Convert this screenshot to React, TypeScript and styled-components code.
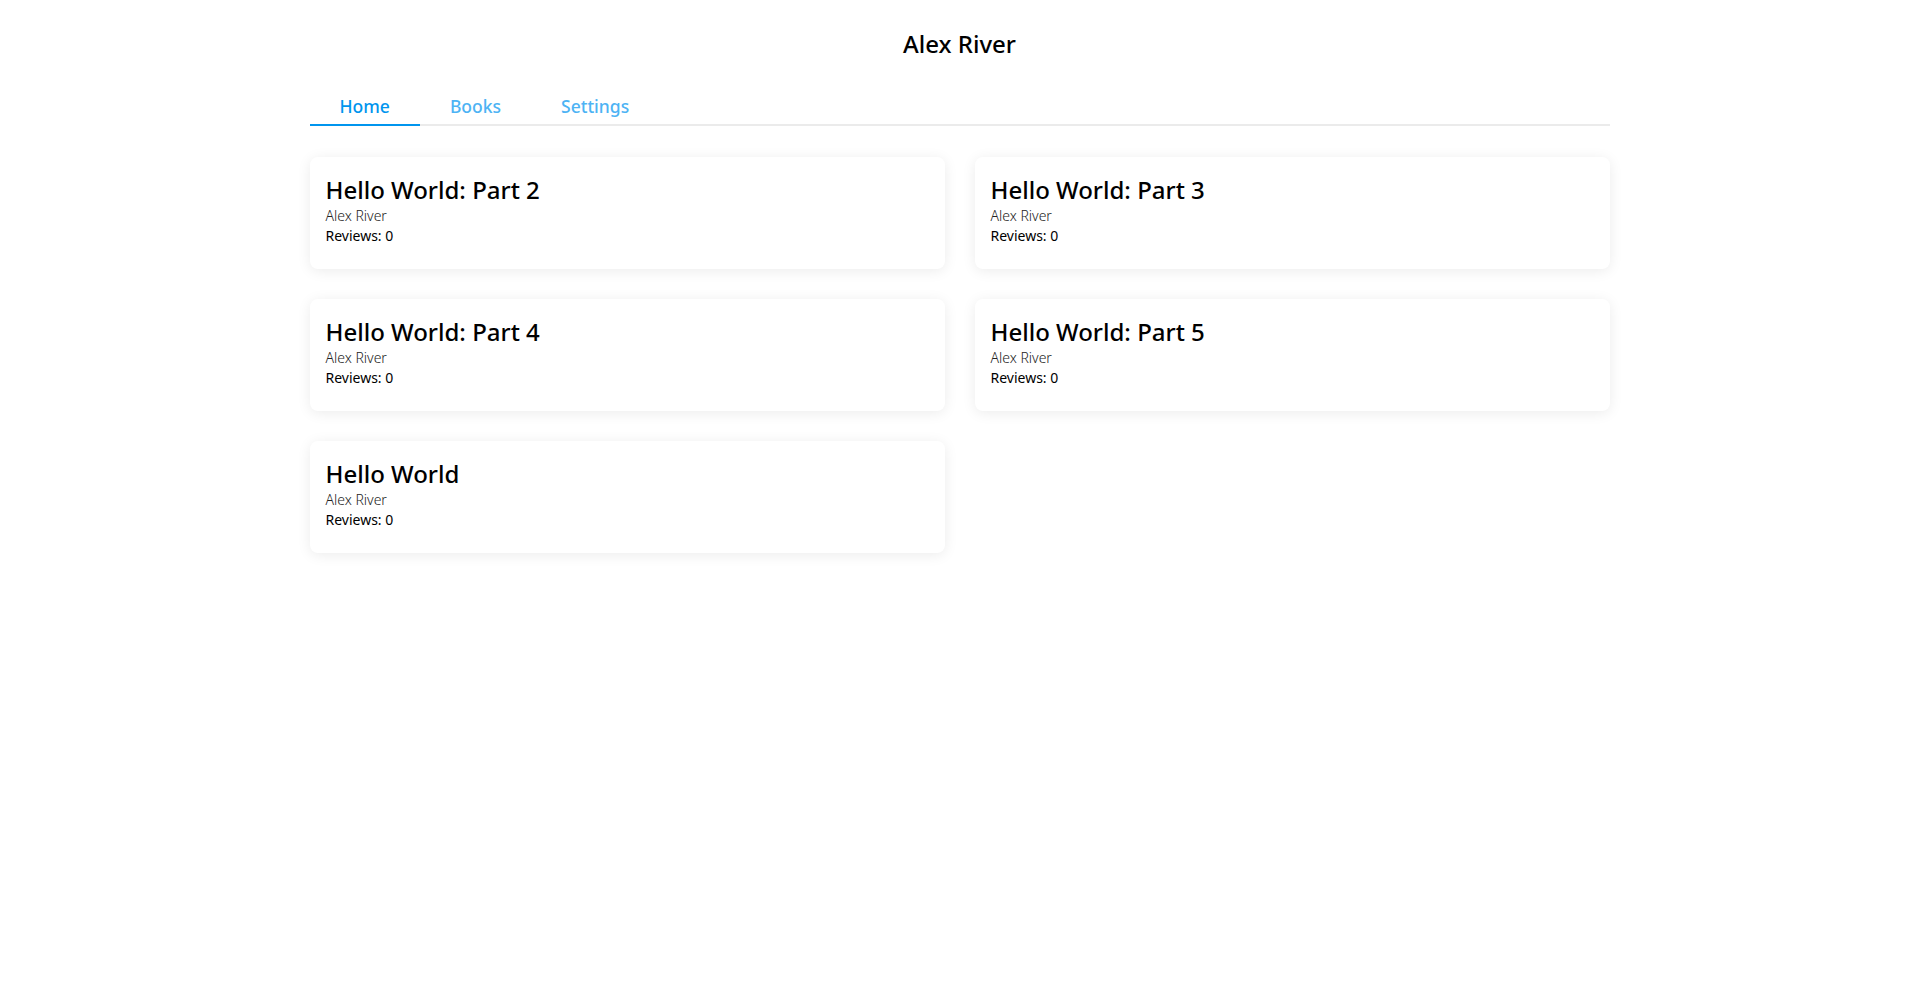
import React, { useState } from "react";
import styled, { createGlobalStyle } from "styled-components";

const GlobalStyle = createGlobalStyle`
  html, body {
    margin: 0;
    padding: 0;
    background: #ffffff;
  }
  body {
    font-family: "Noto Sans", "Open Sans", sans-serif;
    color: #000;
  }
`;

const Page = styled.div`
  max-width: 1300px;
  margin: 0 auto;
  padding: 28px 0 24px;
`;

const Title = styled.h1`
  margin: 0;
  text-align: center;
  font-size: 24px;
  font-weight: 500;
  line-height: 1.36;
  color: #000;
`;

const TabBar = styled.nav`
  display: flex;
  margin-top: 24px;
  border-bottom: 2px solid #ebebeb;
`;

const Tab = styled.button<{ $active?: boolean }>`
  appearance: none;
  background: none;
  border: none;
  margin: 0 0 -2px 0;
  padding: 10px 30px 6px;
  font-family: inherit;
  font-size: 17.5px;
  line-height: 1.36;
  font-weight: 500;
  cursor: pointer;
  color: ${(p) => (p.$active ? "#0095ee" : "#4db3f4")};
  border-bottom: 2px solid ${(p) => (p.$active ? "#0095ee" : "transparent")};
`;

const Grid = styled.div`
  display: grid;
  grid-template-columns: 1fr 1fr;
  column-gap: 30px;
  row-gap: 30px;
  margin-top: 31px;
`;

const Card = styled.div`
  background: #fff;
  border-radius: 8px;
  box-shadow: 0 2px 14px rgba(0, 0, 0, 0.08);
  padding: 18px 16px 24px;
`;

const CardTitle = styled.h2`
  margin: 0;
  font-size: 24px;
  font-weight: 500;
  line-height: 30px;
  color: #000;
`;

const Author = styled.div`
  margin-top: 1px;
  font-size: 14px;
  font-weight: 300;
  line-height: 19px;
  color: #222;
`;

const Reviews = styled.div`
  margin-top: 1px;
  font-size: 14px;
  font-weight: 400;
  line-height: 19px;
  color: #000;
`;

const books = [
  "Hello World: Part 2",
  "Hello World: Part 3",
  "Hello World: Part 4",
  "Hello World: Part 5",
  "Hello World",
];

export default function App() {
  const [tab, setTab] = useState("Home");
  return (
    <>
      <GlobalStyle />
      <Page>
        <Title>Alex River</Title>
        <TabBar>
          {["Home", "Books", "Settings"].map((t) => (
            <Tab key={t} $active={tab === t} onClick={() => setTab(t)}>
              {t}
            </Tab>
          ))}
        </TabBar>
        <Grid>
          {books.map((b) => (
            <Card key={b}>
              <CardTitle>{b}</CardTitle>
              <Author>Alex River</Author>
              <Reviews>Reviews: 0</Reviews>
            </Card>
          ))}
        </Grid>
      </Page>
    </>
  );
}
